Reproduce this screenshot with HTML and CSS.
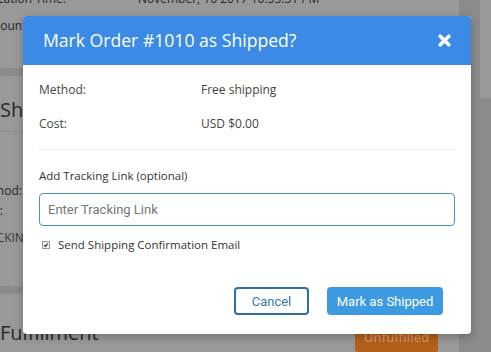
FILE: index.html
```html
<!DOCTYPE html>
<html>
<head>
<meta charset="utf-8">
<link rel="stylesheet" href="styles.css">
</head>
<body>
<div class="page">
  <div class="main">
    <section class="card card-top">
      <div class="kv"><span class="k">Allocation Time:</span><span class="v">November, 16 2017 10:55:31 PM</span></div>
      <div class="kv"><span class="k">Discount</span><span class="v"></span></div>
    </section>
    <section class="card card-ship">
      <h2 class="card-title">Shipping</h2>
      <div class="ship-rows">
        <div class="srow">Method:</div>
        <div class="srow">Cost:</div>
        <div class="srow caps">TRACKING</div>
      </div>
    </section>
    <section class="card card-fulfil">
      <h2 class="card-title">Fulfillment</h2>
      <span class="badge">Unfulfilled</span>
    </section>
  </div>
  <div class="side">
    <div class="side-card"></div>
  </div>
</div>

<div class="overlay">
  <div class="modal">
    <div class="modal-header">
      <h1 class="modal-title">Mark Order #1010 as Shipped?</h1>
      <span class="close" aria-label="Close">
        <svg width="13" height="13" viewBox="0 0 13 13"><path d="M2.2 2.2 L10.8 10.8 M10.8 2.2 L2.2 10.8" stroke="#fff" stroke-width="3.6" stroke-linecap="round" fill="none"/></svg>
      </span>
    </div>
    <div class="modal-body">
      <div class="info">
        <div class="info-row"><span class="info-label">Method:</span><span class="info-value">Free shipping</span></div>
        <div class="info-row"><span class="info-label">Cost:</span><span class="info-value">USD $0.00</span></div>
      </div>
      <hr class="sep">
      <label class="field-label">Add Tracking Link (optional)</label>
      <input class="field" type="text" placeholder="Enter Tracking Link">
      <div class="check-row">
        <span class="check"><svg width="8" height="8" viewBox="0 0 8 8"><path d="M1.6 4.2 L3.2 5.8 L6.4 2" stroke="#222" stroke-width="1.5" fill="none"/></svg></span>
        <span class="check-text">Send Shipping Confirmation Email</span>
      </div>
    </div>
    <div class="modal-footer">
      <button class="btn btn-outline">Cancel</button>
      <button class="btn btn-primary">Mark as Shipped</button>
    </div>
  </div>
</div>
</body>
</html>
```

FILE: styles.css
```css
* { box-sizing: border-box; }
html, body { margin: 0; padding: 0; }
body {
  width: 491px;
  height: 352px;
  overflow: hidden;
  position: relative;
  font-family: "Open Sans", "Noto Sans", sans-serif;
  background: #8b8b8b;
  color: #262626;
}

/* dimmed background page */
.page {
  display: flex;
  height: 352px;
  overflow: hidden;
}
.main {
  width: 485px;
  margin-left: -26px;
  flex: none;
  display: flex;
  flex-direction: column;
  gap: 8px;
}
.card { background: #999; }
.card-top {
  margin-top: -15px;
  height: 85px;
  padding: 0 0 0 3px;
}
.kv {
  display: flex;
  height: 27px;
  align-items: center;
  font-size: 12px;
}
.kv .k { width: 161px; }
.card-ship {
  height: 215px;
}
.card-title {
  margin: 0;
  font-weight: 400;
  font-size: 20px;
  color: #2a2a2a;
  padding: 13px 0 0 26px;
  height: 56px;
  line-height: 42px;
  border-bottom: 1px solid #8a8a8a;
}
.ship-rows {
  padding: 49px 0 0 1px;
  font-size: 12px;
}
.srow { height: 20px; line-height: 20px; }
.srow.caps { height: 28px; line-height: 34px; color: #3a3a3a; }
.card-fulfil {
  flex: 1;
  display: flex;
  align-items: flex-start;
  justify-content: space-between;
  padding: 26px 21px 0 0;
}
.card-fulfil .card-title { border: none; height: auto; line-height: 26px; padding-top: 0; }
.badge {
  margin-top: 6px;
  width: 83px;
  height: 26px;
  background: #b3601a;
  color: #d4935a;
  border-radius: 3px;
  font-size: 13px;
  font-weight: 600;
  text-align: center;
  line-height: 22px;
}
.side {
  flex: 1;
  padding-left: 21px;
}
.side-card {
  height: 98px;
  background: #999;
}

/* modal */
.overlay {
  position: absolute;
  inset: 0;
  padding: 16px 0 0 23px;
}
.modal {
  width: 448px;
  background: #fff;
  border-radius: 4px;
  overflow: hidden;
  box-shadow: 0 3px 9px rgba(0,0,0,0.25);
}
.modal-header {
  height: 49px;
  background: #3a8ae6;
  display: flex;
  align-items: center;
  justify-content: space-between;
  padding: 0 20px 0 20px;
}
.modal-title {
  margin: 0;
  font-size: 17.6px;
  font-weight: 400;
  color: #fff;
  line-height: 24px;
  padding-bottom: 1px;
}
.close { display: flex; padding-bottom: 1px; }
.modal-body {
  padding: 7px 16px 0 16px;
  color: #444;
}
.info-row {
  display: flex;
  height: 34px;
  align-items: center;
  font-size: 12px;
}
.info-label { width: 162px; }
.sep {
  border: 0;
  border-top: 1px solid #ececec;
  margin: 9px 0 0 0;
}
.field-label {
  display: block;
  font-size: 11.5px;
  line-height: 15px;
  margin-top: 18px;
  color: #333;
}
.field {
  display: block;
  width: 100%;
  height: 33px;
  margin-top: 10px;
  border: 1px solid #4d8fbe;
  border-radius: 4px;
  padding: 0 8px;
  font-family: Roboto, "Liberation Sans", Arial, sans-serif;
  font-size: 13px;
  color: #555;
  outline: none;
}
.field::placeholder { color: #757575; }
.check-row {
  display: flex;
  align-items: center;
  margin-top: 11px;
  height: 15px;
  padding-left: 3px;
}
.check {
  width: 8px;
  height: 8px;
  border: 1px solid #9a9a9a;
  background: #ededed;
  display: flex;
  align-items: center;
  justify-content: center;
  margin-right: 8px;
}
.check svg { width: 6px; height: 6px; }
.check-text { font-size: 11.5px; color: #333; }
.modal-footer {
  display: flex;
  justify-content: flex-end;
  gap: 18px;
  padding: 35px 28px 19px 0;
}
.btn {
  height: 28px;
  border-radius: 4px;
  font-family: Roboto, "Liberation Sans", Arial, sans-serif;
  font-size: 13px;
  padding: 0;
  cursor: pointer;
}
.btn-outline {
  width: 75px;
  background: #fff;
  border: 2px solid #2f6f9f;
  color: #3778ae;
}
.btn-primary {
  width: 116px;
  background: #3b9ae1;
  border: 0;
  color: #fff;
}
```
